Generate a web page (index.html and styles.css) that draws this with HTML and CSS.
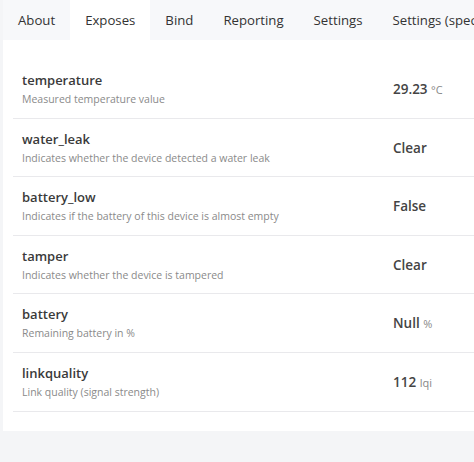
FILE: index.html
```html
<!DOCTYPE html>
<html>
<head>
<meta charset="utf-8">
<link rel="stylesheet" href="styles.css">
</head>
<body>
<div class="page">
  <nav class="tabs">
    <div class="tab">About</div>
    <div class="tab active">Exposes</div>
    <div class="tab">Bind</div>
    <div class="tab">Reporting</div>
    <div class="tab">Settings</div>
    <div class="tab">Settings (specific)</div>
  </nav>
  <section class="card">
    <div class="row">
      <div class="info"><div class="name">temperature</div><div class="desc">Measured temperature value</div></div>
      <div class="value">29.23 <span class="unit">°C</span></div>
    </div>
    <div class="row">
      <div class="info"><div class="name">water_leak</div><div class="desc">Indicates whether the device detected a water leak</div></div>
      <div class="value">Clear</div>
    </div>
    <div class="row">
      <div class="info"><div class="name">battery_low</div><div class="desc">Indicates if the battery of this device is almost empty</div></div>
      <div class="value">False</div>
    </div>
    <div class="row">
      <div class="info"><div class="name">tamper</div><div class="desc">Indicates whether the device is tampered</div></div>
      <div class="value">Clear</div>
    </div>
    <div class="row">
      <div class="info"><div class="name">battery</div><div class="desc">Remaining battery in %</div></div>
      <div class="value">Null <span class="unit">%</span></div>
    </div>
    <div class="row">
      <div class="info"><div class="name">linkquality</div><div class="desc">Link quality (signal strength)</div></div>
      <div class="value">112 <span class="unit">lqi</span></div>
    </div>
  </section>
</div>
</body>
</html>
```
FILE: styles.css
```css
html, body {
  margin: 0;
  padding: 0;
  overflow: hidden;
}
body {
  background: #f4f5f7;
  font-family: "Open Sans", "Noto Sans", sans-serif;
  color: #333;
}
.page {
  width: 640px;
  padding-left: 3px;
}
.tabs {
  display: flex;
  height: 40px;
  background: #f7f8fa;
}
.tab {
  padding: 0 15px;
  display: flex;
  align-items: center;
  font-size: 13.2px;
  color: #333;
  white-space: nowrap;
}
.tab.active {
  background: #fff;
}
.card {
  background: #fff;
  padding: 20px 10px 19px;
}
.row {
  display: grid;
  grid-template-columns: 371px 1fr;
  align-items: center;
  padding: 10px 0 9.6px 9px;
  border-bottom: 1px solid #e9e9ec;
}
.name {
  font-size: 13px;
  font-weight: 600;
  line-height: 20px;
  color: #3a3a3a;
}
.desc {
  font-size: 10.5px;
  line-height: 18px;
  color: #8a8a8a;
}
.value {
  font-size: 13.5px;
  font-weight: 600;
  color: #444;
}
.unit {
  font-size: 11px;
  font-weight: 400;
  color: #888;
}
```
